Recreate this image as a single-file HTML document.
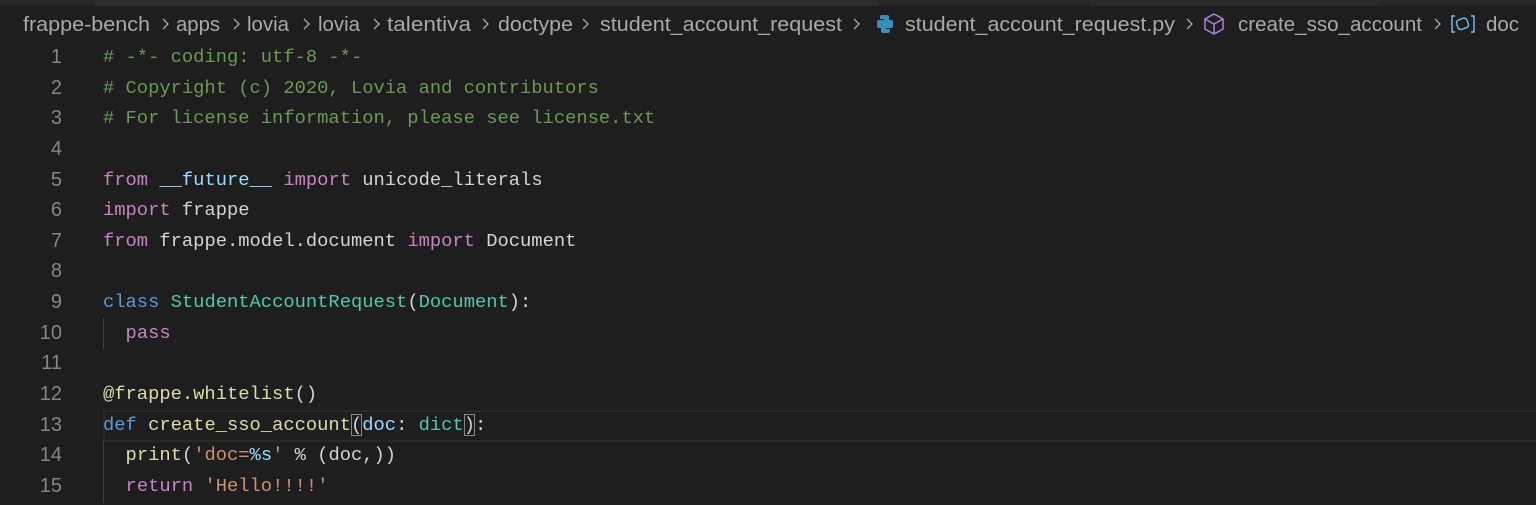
<!DOCTYPE html>
<html><head><meta charset="utf-8"><style>
html,body{margin:0;padding:0;background:#1e1e1e;width:1536px;height:505px;overflow:hidden;position:relative}
.top{position:absolute;left:0;top:0;width:1536px;height:6px;background:#252526}
.top2{position:absolute;left:95px;top:0;width:783px;height:6px;background:#2d2d2d}
.top3{position:absolute;left:1090px;top:0;width:290px;height:6px;background:#2b2b2b}
.code{position:absolute;left:103px;top:42px;font-family:"Liberation Mono",monospace;font-size:18.8px;line-height:30.64px;color:#d4d4d4;white-space:pre;margin:0}
.nums{position:absolute;left:0;width:62px;top:42px;text-align:right;font-family:"Liberation Sans",sans-serif;font-size:20px;line-height:30.64px;color:#858585;white-space:pre;margin:0}
.c{color:#6a9955}.k{color:#569cd6}.p{color:#c586c0}.t{color:#4ec9b0}.f{color:#dcdcaa}.v{color:#9cdcfe}.s{color:#ce9178}
.hl{position:absolute;left:103px;right:0;top:410px;height:28px;border:2px solid #282828;border-right:none}
.g{position:absolute;left:103px;width:1px;background:#404040}
.bb{outline:1px solid #888;outline-offset:-1px}
</style></head><body>
<div class="top"></div><div class="top2"></div><div class="top3"></div>
<svg style="position:absolute;left:0;top:0" width="1536" height="40">
<g font-family="Liberation Sans,sans-serif" font-size="20" fill="#a9a9a9">
<text x="23" y="31" textLength="127" lengthAdjust="spacingAndGlyphs">frappe-bench</text>
<text x="176" y="31" textLength="44" lengthAdjust="spacingAndGlyphs">apps</text>
<text x="247" y="31" textLength="42" lengthAdjust="spacingAndGlyphs">lovia</text>
<text x="318" y="31" textLength="42" lengthAdjust="spacingAndGlyphs">lovia</text>
<text x="387" y="31" textLength="84" lengthAdjust="spacingAndGlyphs">talentiva</text>
<text x="498" y="31" textLength="75" lengthAdjust="spacingAndGlyphs">doctype</text>
<text x="600" y="31" textLength="242" lengthAdjust="spacingAndGlyphs">student_account_request</text>
<text x="905" y="31" textLength="270" lengthAdjust="spacingAndGlyphs">student_account_request.py</text>
<text x="1238" y="31" textLength="184" lengthAdjust="spacingAndGlyphs">create_sso_account</text>
<text x="1486" y="31" textLength="33" lengthAdjust="spacingAndGlyphs">doc</text>
</g>
<g fill="none" stroke="#a9a9a9" stroke-width="1.3">
<path d="M163 19l5 5-5 5M234 19l5 5-5 5M304 19l5 5-5 5M374 19l5 5-5 5M483 19l5 5-5 5M583 19l5 5-5 5M854 19l5 5-5 5M1187 19l5 5-5 5M1435 19l5 5-5 5"/>
</g>
<g fill="#3c8dbc">
<path d="M884 15h3a2 2 0 0 1 2 2v5a2 2 0 0 1-2 2h-4a2 2 0 0 0-2 2v2h-2a2 2 0 0 1-2-2v-4a2 2 0 0 1 2-2h5v-1h-4v-2a2 2 0 0 1 2-2z"/>
<path d="M886 33h-3a2 2 0 0 1-2-2v-5a2 2 0 0 1 2-2h4a2 2 0 0 0 2-2v-2h2a2 2 0 0 1 2 2v4a2 2 0 0 1-2 2h-5v1h4v2a2 2 0 0 1-2 2z"/>
</g>
<g fill="none" stroke="#b180d7" stroke-width="1.5">
<path d="M1214 14l9 5v10l-9 5-9-5V19zM1205 19l9 5 9-5M1214 24v10"/>
</g>
<g fill="none" stroke="#75beff" stroke-width="1.4">
<path d="M1455 16h-3v16h3M1471 16h3v16h-3"/><rect x="1457" y="19" width="11" height="10" rx="3" transform="rotate(-20 1462 24)"/>
</g>
</svg>
<div class="hl"></div>
<div class="g" style="top:318px;height:31px"></div>
<div class="g" style="top:441px;height:62px"></div>
<pre class="nums">1
2
3
4
5
6
7
8
9
10
11
12
13
14
15</pre>
<pre class="code"><span class="c"># -*- coding: utf-8 -*-</span>
<span class="c"># Copyright (c) 2020, Lovia and contributors</span>
<span class="c"># For license information, please see license.txt</span>

<span class="p">from</span> <span class="v">__future__</span> <span class="p">import</span> unicode_literals
<span class="p">import</span> frappe
<span class="p">from</span> frappe.model.document <span class="p">import</span> Document

<span class="k">class</span> <span class="t">StudentAccountRequest</span>(<span class="t">Document</span>):
  <span class="p">pass</span>

<span class="f">@frappe.whitelist</span>()
<span class="k">def</span> <span class="f">create_sso_account</span><span class="bb">(</span><span class="v">doc</span>: <span class="t">dict</span><span class="bb">)</span>:
  <span class="f">print</span>(<span class="s">'doc=</span><span class="v">%s</span><span class="s">'</span> % (doc,))
  <span class="p">return</span> <span class="s">'Hello!!!!'</span></pre>
</body></html>
